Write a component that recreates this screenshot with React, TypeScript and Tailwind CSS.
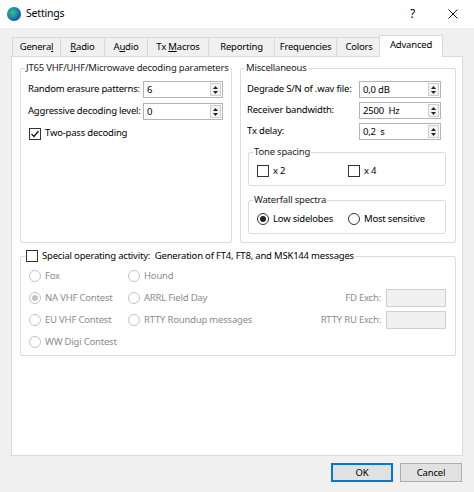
import type { ReactNode } from "react";

const tabs = [
  { label: <>Genera<u>l</u></>, w: "w-[49px]" },
  { label: <><u>R</u>adio</>, w: "w-[45px]" },
  { label: <>A<u>u</u>dio</>, w: "w-[44px]" },
  { label: <>Tx <u>M</u>acros</>, w: "w-[62px]" },
  { label: <>Reportin<u>g</u></>, w: "w-[67px]" },
  { label: <>Frequencies</>, w: "w-[63px]" },
  { label: <>Colors</>, w: "w-[46px]" },
];

function Spin({ value, w }: { value: string; w: string }) {
  return (
    <div className={`flex h-[17px] ${w} shrink-0 items-stretch border border-[#b4b4b4] bg-white`}>
      <span className="flex-1 whitespace-pre pl-[3px] leading-[15px]">{value}</span>
      <div className="my-px mr-px flex w-[11px] flex-col items-center justify-center gap-[2px] border border-[#cfcfcf] bg-[#f3f3f3]">
        <svg width="5" height="3" viewBox="0 0 5 3">
          <path d="M0 3 L2.5 0 L5 3 Z" fill="#222" />
        </svg>
        <svg width="5" height="3" viewBox="0 0 5 3">
          <path d="M0 0 L2.5 3 L5 0 Z" fill="#222" />
        </svg>
      </div>
    </div>
  );
}

function Check({ checked }: { checked?: boolean }) {
  return (
    <span className="flex h-[12px] w-[12px] shrink-0 items-center justify-center border border-[#333] bg-white">
      {checked && (
        <svg width="10" height="10" viewBox="0 0 10 10">
          <path d="M1.5 5 L4 7.5 L8.5 2" stroke="#111" strokeWidth="1.2" fill="none" />
        </svg>
      )}
    </span>
  );
}

function Radio({ checked, disabled }: { checked?: boolean; disabled?: boolean }) {
  return (
    <span
      className={`flex h-[12px] w-[12px] shrink-0 items-center justify-center rounded-full border bg-white ${
        disabled ? "border-[#c4c4c4]" : "border-[#333]"
      }`}
    >
      {checked && (
        <span className={`h-[6px] w-[6px] rounded-full ${disabled ? "bg-[#c4c4c4]" : "bg-[#222]"}`} />
      )}
    </span>
  );
}

function Group({ title, className, children }: { title: ReactNode; className: string; children: ReactNode }) {
  return (
    <fieldset className={`min-w-0 rounded-[2px] border border-[#dcdcdc] ${className}`}>
      <legend className="ml-[4px] px-[1px] leading-[16px] text-[#222]">{title}</legend>
      {children}
    </fieldset>
  );
}

function DisRadio({ label, checked }: { label: string; checked?: boolean }) {
  return (
    <div className="flex h-[22px] items-center gap-[4px] text-[#8c8c8c]">
      <Radio disabled checked={checked} />
      <span>{label}</span>
    </div>
  );
}

export default function App() {
  return (
    <div className="relative h-[492px] w-[474px] overflow-hidden whitespace-nowrap bg-[#f0f0f0] font-['Noto_Sans',sans-serif] text-[9.5px] tracking-[-0.2px] text-black">
      {/* Title bar */}
      <div className="flex h-[28px] items-center bg-white pl-[7px] pr-[16px] text-[10.5px]">
        <svg width="14" height="14" viewBox="0 0 14 14">
          <defs>
            <radialGradient id="g" cx="0.4" cy="0.4" r="0.6">
              <stop offset="0" stopColor="#3fc06a" />
              <stop offset="0.55" stopColor="#1a8fb0" />
              <stop offset="1" stopColor="#1a4fa0" />
            </radialGradient>
          </defs>
          <circle cx="7" cy="7" r="7" fill="url(#g)" />
        </svg>
        <span className="ml-[5px]">Settings</span>
        <span className="ml-auto text-[12px]">?</span>
        <svg className="ml-[33px]" width="10" height="10" viewBox="0 0 10 10">
          <path d="M0.5 0.5 L9.5 9.5 M9.5 0.5 L0.5 9.5" stroke="#111" strokeWidth="1" />
        </svg>
      </div>

      {/* Tabs */}
      <div className="mt-[7px] flex h-[21px] items-end pl-[12px]">
        {tabs.map((t, i) => (
          <div
            key={i}
            className={`flex h-[19px] ${t.w} -mr-px items-center justify-center border border-b-0 border-[#d9d9d9] bg-[#f0f0f0] leading-none`}
          >
            <span>{t.label}</span>
          </div>
        ))}
        <div className="relative z-10 -mb-px -ml-[2px] flex h-[22px] w-[64px] items-center justify-center border border-b-0 border-[#d9d9d9] bg-white pb-[2px]">
          Advanced
        </div>
      </div>

      {/* Panel */}
      <div className="mx-[11px] h-[400px] border border-[#d9d9d9] bg-white">
        <div className="flex gap-[8px] pl-[8px] pr-[6px] pt-[3px]">
          <Group title="JT65 VHF/UHF/Microwave decoding parameters" className="h-[183px] w-[212px] shrink-0">
            <div className="flex flex-col gap-[5px] px-[7px] pt-[5px]">
              <div className="flex h-[17px] items-center">
                <span className="w-[115px] shrink-0">Random erasure patterns:</span>
                <Spin value="6" w="w-[80px]" />
              </div>
              <div className="flex h-[17px] items-center">
                <span className="w-[115px] shrink-0">Aggressive decoding level:</span>
                <Spin value="0" w="w-[80px]" />
              </div>
              <div className="flex h-[17px] items-center gap-[4px] pl-px">
                <Check checked />
                <span>Two-pass decoding</span>
              </div>
            </div>
          </Group>

          <Group title="Miscellaneous" className="h-[183px] flex-1">
            <div className="flex flex-col gap-[4px] pl-[6px] pt-[5px]">
              <div className="flex h-[17px] items-center">
                <span className="w-[112px] shrink-0">Degrade S/N of .wav file:</span>
                <Spin value="0,0 dB" w="w-[82px]" />
              </div>
              <div className="flex h-[17px] items-center">
                <span className="w-[112px] shrink-0">Receiver bandwidth:</span>
                <Spin value="2500  Hz" w="w-[82px]" />
              </div>
              <div className="flex h-[17px] items-center">
                <span className="w-[112px] shrink-0">Tx delay:</span>
                <Spin value="0,2  s" w="w-[82px]" />
              </div>
            </div>
            <div className="flex flex-col gap-[6px] pl-[7px] pr-[9px] pt-[4px]">
              <Group title="Tone spacing" className="h-[42px]">
                <div className="grid grid-cols-[91px_1fr] pl-[8px] pt-[2px]">
                  <div className="flex h-[18px] items-center gap-[4px]">
                    <Check />
                    <span>x 2</span>
                  </div>
                  <div className="flex h-[18px] items-center gap-[4px]">
                    <Check />
                    <span>x 4</span>
                  </div>
                </div>
              </Group>
              <Group title="Waterfall spectra" className="h-[42px]">
                <div className="grid grid-cols-[91px_1fr] pl-[8px] pt-[2px]">
                  <div className="flex h-[18px] items-center gap-[4px]">
                    <Radio checked />
                    <span>Low sidelobes</span>
                  </div>
                  <div className="flex h-[18px] items-center gap-[4px]">
                    <Radio />
                    <span>Most sensitive</span>
                  </div>
                </div>
              </Group>
            </div>
          </Group>
        </div>

        <div className="pl-[8px] pr-[6px] pt-[5px]">
          <Group
            title={
              <span className="flex items-center gap-[4px] text-black">
                <Check />
                <span>Special operating activity:&nbsp; Generation of FT4, FT8, and MSK144 messages</span>
              </span>
            }
            className="h-[108px]"
          >
            <div className="grid grid-cols-[99px_1fr_auto] pl-[8px] pr-[9px] pt-[1px]">
              <DisRadio label="Fox" />
              <DisRadio label="Hound" />
              <div />
              <DisRadio label="NA VHF Contest" checked />
              <DisRadio label="ARRL Field Day" />
              <div className="flex h-[22px] items-center justify-end gap-[5px] text-[#8c8c8c]">
                <span>FD Exch:</span>
                <span className="h-[18px] w-[60px] border border-[#cfcfcf] bg-[#f0f0f0]" />
              </div>
              <DisRadio label="EU VHF Contest" />
              <DisRadio label="RTTY Roundup messages" />
              <div className="flex h-[22px] items-center justify-end gap-[5px] text-[#8c8c8c]">
                <span>RTTY RU Exch:</span>
                <span className="h-[18px] w-[60px] border border-[#cfcfcf] bg-[#f0f0f0]" />
              </div>
              <DisRadio label="WW Digi Contest" />
            </div>
          </Group>
        </div>
      </div>

      {/* Buttons */}
      <div className="mt-[7px] flex justify-end gap-[7px] pr-[12px]">
        <button className="h-[19px] w-[62px] border-2 border-[#0078d7] bg-[#e1e1e1] leading-none">OK</button>
        <button className="h-[19px] w-[62px] border border-[#adadad] bg-[#e1e1e1] leading-none">Cancel</button>
      </div>
    </div>
  );
}
